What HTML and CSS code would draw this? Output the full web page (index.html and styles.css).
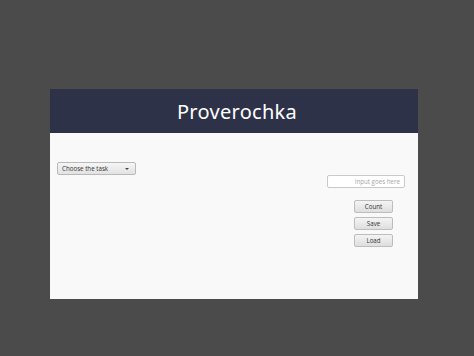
FILE: index.html
```html
<!DOCTYPE html>
<html>
<head>
<meta charset="utf-8">
<link rel="stylesheet" href="styles.css">
</head>
<body>
<div class="window">
  <header class="titlebar"><h1 class="title">Proverochka</h1></header>
  <main class="content">
    <div class="left">
      <div class="combo"><span class="combo-label">Choose the task</span><span class="arrow"></span></div>
    </div>
    <div class="right">
      <input class="field" type="text" placeholder="Input goes here">
      <div class="buttons">
        <button class="btn">Count</button>
        <button class="btn">Save</button>
        <button class="btn">Load</button>
      </div>
    </div>
  </main>
</div>
</body>
</html>
```

FILE: styles.css
```css
html, body {
  margin: 0;
  height: 100%;
}
body {
  background: #4b4b4b;
  padding: 89px 0 0 50px;
  box-sizing: border-box;
  font-family: "Open Sans", "Noto Sans", sans-serif;
}
.window {
  width: 368px;
  height: 210px;
  background: #f9f9f9;
  display: flex;
  flex-direction: column;
}
.titlebar {
  height: 44px;
  background: #2e3249;
  display: flex;
  align-items: center;
  justify-content: center;
}
.title {
  margin: 0;
  color: #ffffff;
  font-family: "Comic Sans MS", "Noto Sans", sans-serif;
  font-weight: normal;
  font-size: 20px;
  letter-spacing: 0.3px;
  padding-left: 6px;
}
.content {
  flex: 1;
  display: flex;
  justify-content: space-between;
  padding: 29px 13px 0 7px;
}
.combo {
  width: 79px;
  height: 13px;
  box-sizing: border-box;
  border: 1px solid #b9b9b9;
  border-radius: 2px;
  background: linear-gradient(#f6f6f6, #e2e2e2);
  display: flex;
  align-items: center;
  justify-content: space-between;
  padding: 0 6px 0 4px;
  font-size: 6.2px;
  color: #333;
}
.arrow {
  width: 0;
  height: 0;
  border-left: 2px solid transparent;
  border-right: 2px solid transparent;
  border-top: 2px solid #444;
}
.right {
  display: flex;
  flex-direction: column;
  align-items: flex-end;
  padding-top: 13px;
}
.field {
  width: 78px;
  height: 13px;
  box-sizing: border-box;
  border: 1px solid #c9c9c9;
  border-radius: 2px;
  background: #fff;
  font-family: inherit;
  font-size: 6.2px;
  text-align: right;
  padding: 0 4px;
  outline: none;
}
.field::placeholder {
  color: #a6a6a6;
}
.buttons {
  display: flex;
  flex-direction: column;
  gap: 4px;
  margin-top: 12px;
  margin-right: 12px;
}
.btn {
  width: 39px;
  height: 13px;
  box-sizing: border-box;
  border: 1px solid #bdbdbd;
  border-radius: 2px;
  background: linear-gradient(#f4f4f4, #dedede);
  font-family: inherit;
  font-size: 6.2px;
  color: #333;
  padding: 0;
}
```
